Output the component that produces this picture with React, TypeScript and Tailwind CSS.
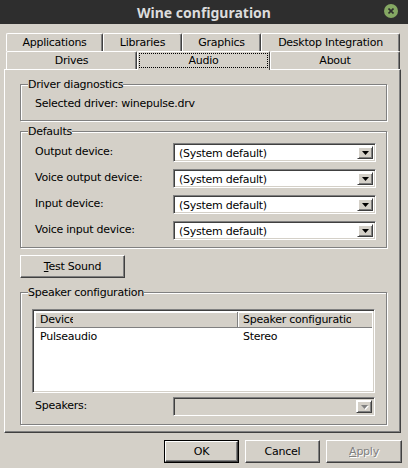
const BG = 'bg-[#d4d0c8]';

// classic win32 bevels
const raised =
  'border border-t-white border-l-white border-r-[#404040] border-b-[#404040] shadow-[inset_-1px_-1px_0_#808080]';
const sunken =
  'border border-t-[#808080] border-l-[#808080] border-r-white border-b-white shadow-[inset_1px_1px_0_#404040,inset_-1px_-1px_0_#d4d0c8]';

function Arrow({ disabled }: { disabled?: boolean }) {
  return (
    <svg width="7" height="4" viewBox="0 0 7 4" className={disabled ? 'drop-shadow-[1px_1px_0_#fff]' : ''}>
      <path d="M0 0h7L3.5 4z" fill={disabled ? '#808080' : '#000'} />
    </svg>
  );
}

function Combo({ value, disabled }: { value?: string; disabled?: boolean }) {
  return (
    <div
      className={`flex h-[19px] w-[203px] items-stretch p-[2px] ${sunken} ${disabled ? BG : 'bg-white'}`}
    >
      <span className="flex-1 truncate pl-[3px] leading-[15px]">{value}</span>
      <span className={`flex w-[16px] items-center justify-center ${BG} ${raised} border-t-[#d4d0c8] border-l-[#d4d0c8] shadow-[inset_1px_1px_0_#fff,inset_-1px_-1px_0_#808080]`}>
        <Arrow disabled={disabled} />
      </span>
    </div>
  );
}

function Group({
  label,
  className = '',
  children,
}: {
  label: string;
  className?: string;
  children: React.ReactNode;
}) {
  return (
    <fieldset
      className={`min-w-0 border border-[#808080] shadow-[inset_1px_1px_0_#fff,1px_1px_0_#fff] ${className}`}
    >
      <legend className={`ml-[7px] px-0 leading-[13px] ${BG}`}>{label}</legend>
      {children}
    </fieldset>
  );
}

function Tab({ label, w, selected }: { label: string; w: string; selected?: boolean }) {
  if (selected) {
    return (
      <div
        className={`relative z-10 -mb-px flex h-[19px] ${w} items-stretch rounded-t-[2px] border-l border-t border-r border-l-white border-t-white border-r-[#404040] px-px pt-px pb-[2px] ${BG}`}
      >
        <div className="flex flex-1 items-center justify-center border border-dotted border-black leading-[13px]">
          {label}
        </div>
      </div>
    );
  }
  return (
    <div
      className={`flex h-[18px] ${w} items-center justify-center rounded-t-[2px] border-l border-t border-r border-l-white border-t-white border-r-[#404040] shadow-[inset_-1px_0_0_#808080] leading-[13px] ${BG}`}
    >
      {label}
    </div>
  );
}

function Button({
  children,
  isDefault,
  disabled,
  className = '',
}: {
  children: React.ReactNode;
  isDefault?: boolean;
  disabled?: boolean;
  className?: string;
}) {
  const inner = (
    <div
      className={`flex h-full w-full items-center justify-center leading-[13px] ${raised} ${
        disabled ? 'text-[#808080] [text-shadow:1px_1px_0_#fff]' : ''
      }`}
    >
      {children}
    </div>
  );
  return (
    <div className={`${BG} ${isDefault ? 'border border-black' : ''} ${className}`}>{inner}</div>
  );
}

const devices = ['Output device:', 'Voice output device:', 'Input device:', 'Voice input device:'];

export default function App() {
  return (
    <div
      className={`flex h-[468px] w-[408px] flex-col overflow-hidden font-['DejaVu_Sans',sans-serif] text-[11px] tracking-[-0.25px] text-black ${BG}`}
    >
      {/* title bar */}
      <div className="relative flex h-[24px] shrink-0 items-center justify-center bg-[#2e2e2e]">
        <span className="font-['Noto_Sans',sans-serif] text-[14px] font-bold tracking-normal text-[#dcdcdc]">
          Wine configuration
        </span>
        <span className="absolute top-[4px] right-[10px] flex h-[14px] w-[14px] items-center justify-center rounded-full bg-[#85a863]">
          <svg width="6" height="6" viewBox="0 0 6 6">
            <path d="M0.5 0.5l5 5M5.5 0.5l-5 5" stroke="#2e2e2e" strokeWidth="1.6" />
          </svg>
        </span>
      </div>

      {/* tabs */}
      <div className="ml-[6px] mt-[9px] flex">
        <Tab label="Applications" w="w-[97px]" />
        <Tab label="Libraries" w="w-[79px]" />
        <Tab label="Graphics" w="w-[79px]" />
        <Tab label="Desktop Integration" w="w-[139px]" />
      </div>
      <div className="ml-[6px] flex">
        <Tab label="Drives" w="w-[131px]" />
        <Tab label="Audio" w="w-[133px]" selected />
        <Tab label="About" w="w-[130px]" />
      </div>

      {/* panel */}
      <div
        className={`ml-[4px] flex h-[364px] w-[397px] flex-col pt-[8px] pr-[13px] pb-[6px] pl-[15px] ${raised}`}
      >
        <Group label="Driver diagnostics">
          <div className="pt-[6px] pb-[9px] pl-[14px] leading-[14px]">Selected driver: winepulse.drv</div>
        </Group>

        <Group label="Defaults" className="mt-[4px]">
          <div className="flex flex-col gap-[7px] pt-[5px] pr-[10px] pb-[7px] pl-[14px]">
            {devices.map((d) => (
              <div key={d} className="flex items-center">
                <span className="w-[138px]">{d}</span>
                <Combo value="(System default)" />
              </div>
            ))}
          </div>
        </Group>

        <Button className="mt-[7px] h-[23px] w-[105px]">
          <span>
            <span className="underline">T</span>est Sound
          </span>
        </Button>

        <Group label="Speaker configuration" className="mt-[8px]">
          <div className="flex flex-col pt-[10px] pr-[11px] pb-[8px] pl-[11px]">
            <div className={`flex h-[84px] flex-col overflow-hidden bg-white p-[2px] ${sunken}`}>
              <div className={`flex h-[16px] shrink-0 ${BG} whitespace-nowrap leading-[15px]`}>
                <div className="w-[203px] shrink-0 overflow-hidden border-r border-b border-r-[#808080] border-b-[#808080] pl-[5px] shadow-[inset_1px_1px_0_#fff]">
                  <span className="block w-[33px] overflow-hidden">Device</span>
                </div>
                <div className="min-w-0 flex-1 overflow-hidden border-b border-b-[#808080] pl-[5px] shadow-[inset_1px_1px_0_#fff]">
                  <span className="block w-[108px] overflow-hidden">Speaker configuration</span>
                </div>
              </div>
              <div className="flex h-[15px] items-center pt-[2px] leading-[14px]">
                <span className="w-[203px] pl-[5px]">Pulseaudio</span>
                <span className="pl-[5px]">Stereo</span>
              </div>
            </div>
            <div className="mt-[4px] flex items-center">
              <span className="w-[141px] pl-[3px]">Speakers:</span>
              <Combo disabled />
            </div>
          </div>
        </Group>
      </div>

      {/* dialog buttons */}
      <div className="mt-[7px] flex justify-end gap-[6px] pr-[6px]">
        <Button isDefault className="h-[23px] w-[75px]">OK</Button>
        <Button className="h-[23px] w-[75px]">Cancel</Button>
        <Button disabled className="h-[23px] w-[76px]">
          <span className="underline">A</span>pply
        </Button>
      </div>
    </div>
  );
}
